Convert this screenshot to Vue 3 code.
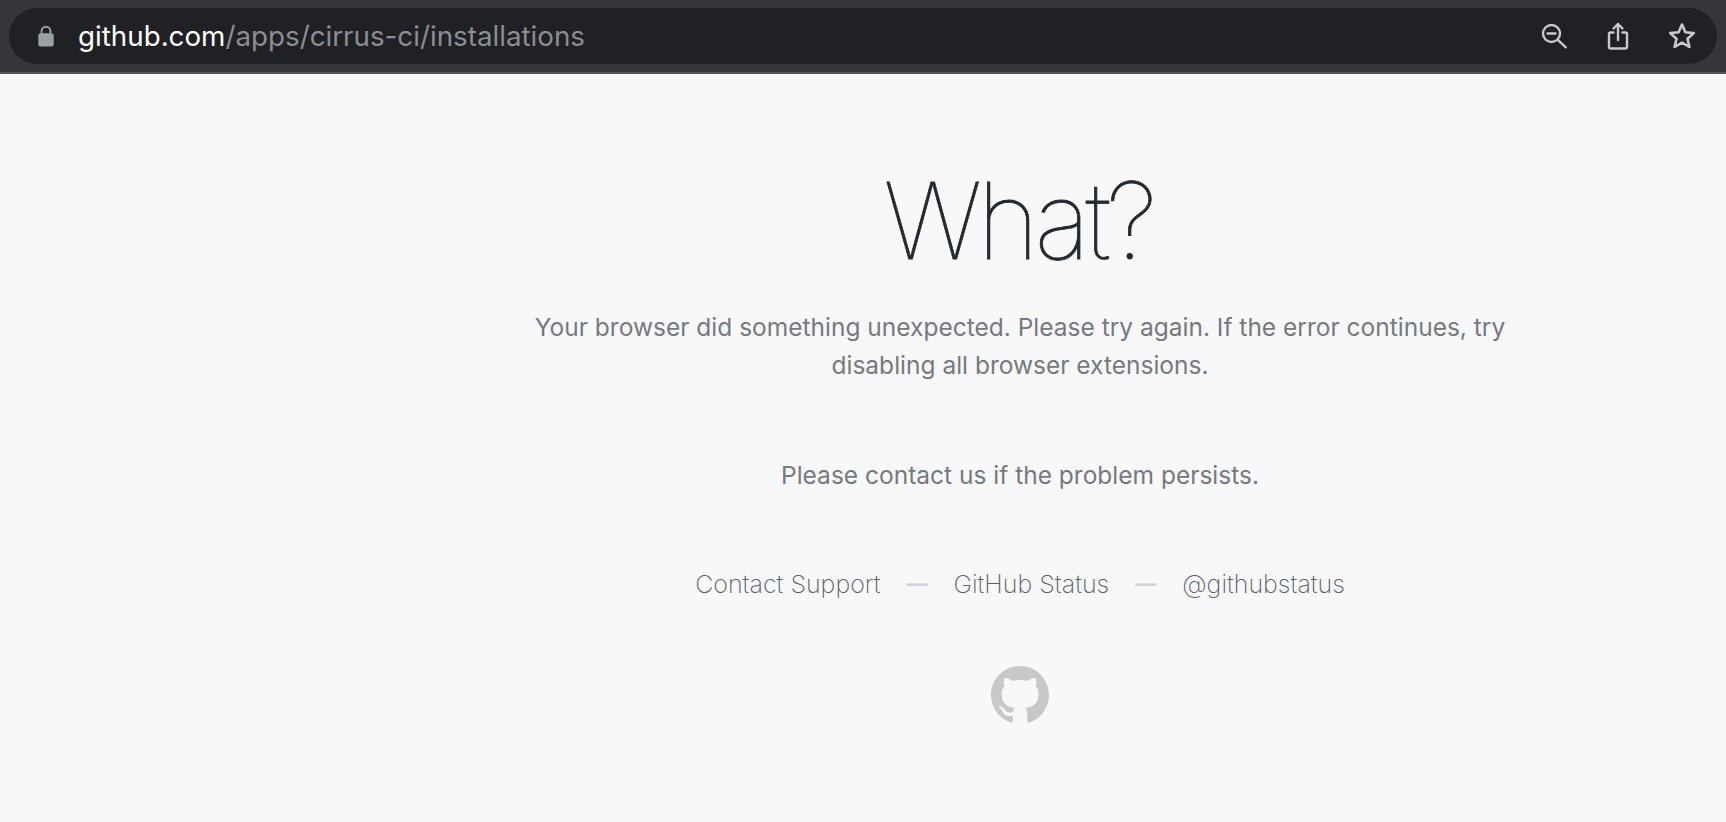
<script setup>
const links = ['Contact Support', 'GitHub Status', '@githubstatus'];
</script>

<template>
  <div class="page">
    <header class="chrome">
      <div class="omnibox">
        <svg class="lock" viewBox="0 0 16 20" width="18" height="22">
          <path d="M4 8V5.5a4 4 0 0 1 8 0V8" fill="none" stroke="#9aa0a6" stroke-width="1.8" />
          <rect x="1" y="7.5" width="14" height="12" rx="2" fill="#9aa0a6" />
        </svg>
        <div class="url"><span class="host">github.com</span>/apps/cirrus-ci/installations</div>
        <div class="actions">
          <svg viewBox="0 0 28 28" width="28" height="28" fill="none" stroke="#c8c9cb" stroke-width="2.4">
            <circle cx="11.5" cy="11.5" r="8.5" />
            <path d="M7.5 11.5h8M17.8 17.8l8 7.5" stroke-linecap="round" />
          </svg>
          <svg viewBox="0 0 28 28" width="28" height="28" fill="none" stroke="#c8c9cb" stroke-width="2.4">
            <path d="M9.5 10.5H6.5a1.5 1.5 0 0 0-1.5 1.5v13a1.5 1.5 0 0 0 1.5 1.5h15a1.5 1.5 0 0 0 1.5-1.5V12a1.5 1.5 0 0 0-1.5-1.5h-3M14 18V2M9.5 6.5 14 2l4.5 4.5" stroke-linecap="round" stroke-linejoin="round" />
          </svg>
          <svg viewBox="0 0 28 28" width="28" height="28" fill="none" stroke="#c8c9cb" stroke-width="2.6">
            <path d="M14 2.5l3.4 7.8 8.4.8-6.3 5.6 1.9 8.3-7.4-4.4-7.4 4.4 1.9-8.3-6.3-5.6 8.4-.8z" stroke-linejoin="round" />
          </svg>
        </div>
      </div>
    </header>

    <main class="content">
      <h1 class="title">What?</h1>
      <p class="message">Your browser did something unexpected. Please try again. If the error continues, try disabling all browser extensions.</p>
      <p class="persist">Please contact us if the problem persists.</p>
      <nav class="links">
        <template v-for="(link, i) in links" :key="link">
          <span v-if="i > 0" class="dash">&mdash;</span>
          <a href="#" class="link">{{ link }}</a>
        </template>
      </nav>
      <svg class="mark" viewBox="0 0 16 16" width="58" height="58">
        <path d="M8 0C3.58 0 0 3.58 0 8c0 3.54 2.29 6.53 5.47 7.59.4.07.55-.17.55-.38 0-.19-.01-.82-.01-1.49-2.01.37-2.53-.49-2.69-.94-.09-.23-.48-.94-.82-1.13-.28-.15-.68-.52-.01-.53.63-.01 1.08.58 1.23.82.72 1.21 1.87.87 2.33.66.07-.52.28-.87.51-1.07-1.78-.2-3.64-.89-3.64-3.95 0-.87.31-1.59.82-2.15-.08-.2-.36-1.02.08-2.12 0 0 .67-.21 2.2.82.64-.18 1.32-.27 2-.27.68 0 1.36.09 2 .27 1.53-1.04 2.2-.82 2.2-.82.44 1.1.16 1.92.08 2.12.51.56.82 1.27.82 2.15 0 3.07-1.87 3.75-3.65 3.95.29.25.54.73.54 1.48 0 1.07-.01 1.93-.01 2.2 0 .21.15.46.55.38A8.013 8.013 0 0016 8c0-4.42-3.58-8-8-8z" fill="#c6c8ca" />
      </svg>
    </main>
  </div>
</template>

<style>
html, body { margin: 0; background: #f6f8fa; }
</style>

<style scoped>
.page {
  height: 822px;
  overflow: hidden;
  display: flex;
  flex-direction: column;
  font-family: Inter, "Liberation Sans", sans-serif;
  background: #f6f8fa;
}
.chrome {
  height: 74px;
  padding: 8px 9px 0;
  box-sizing: border-box;
  background: #35363a;
  border-bottom: 2px solid #55565a;
  flex: none;
}
.omnibox {
  height: 56px;
  border-radius: 28px;
  background: #202124;
  display: flex;
  align-items: center;
  padding: 0 21px 0 28px;
}
.lock { flex: none; }
.url {
  margin-left: 23px;
  font-size: 27.75px;
  color: #8b8e92;
  flex: 1;
}
.host { color: #fff; }
.actions {
  display: flex;
  gap: 36px;
  align-items: center;
}
.content {
  width: 1000px;
  padding-left: 520px;
  display: flex;
  flex-direction: column;
  align-items: center;
  text-align: center;
}
.title {
  margin: 83px 0 0 -4px;
  font-size: 106px;
  font-weight: 100;
  -webkit-text-stroke: 0.8px #24292e;
  letter-spacing: -4.6px;
  line-height: 128px;
  color: #24292e;
}
.message {
  margin: 23px 0 0;
  font-size: 24.5px;
  line-height: 38px;
  color: #76797e;
}
.persist {
  margin: 72px 0 0;
  font-size: 24.5px;
  line-height: 38px;
  color: #76797e;
}
.links {
  margin-top: 71px;
  display: flex;
  align-items: center;
  gap: 26px;
  font-size: 25px;
  font-weight: 250;
  line-height: 38px;
}
.link {
  color: #5c6167;
  text-decoration: none;
}
.dash {
  color: #cfd2d6;
  font-size: 21px;
  font-weight: 700;
}
.mark {
  margin-top: 63px;
  filter: blur(0.7px);
}
</style>
